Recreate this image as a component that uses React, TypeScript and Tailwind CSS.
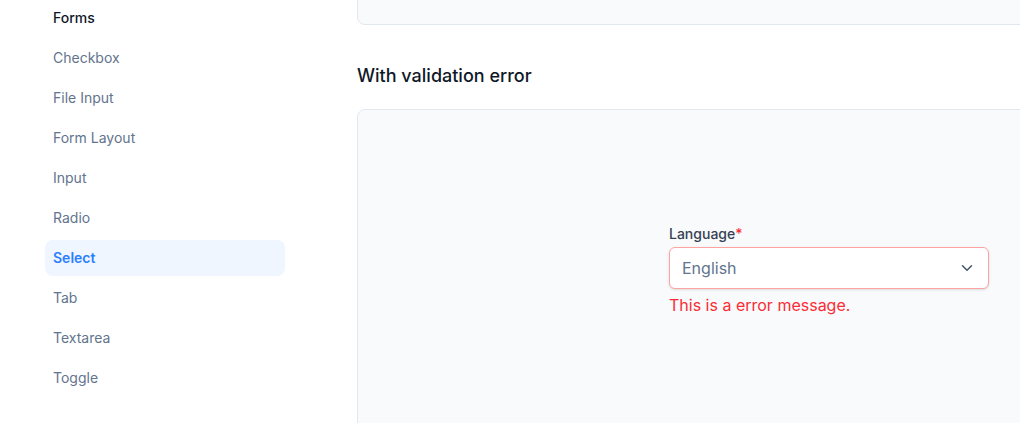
import { ChevronDown } from 'lucide-react';

const navItems = ['Checkbox', 'File Input', 'Form Layout', 'Input', 'Radio', 'Select', 'Tab', 'Textarea', 'Toggle'];

export default function App() {
  return (
    <div className="flex h-[423px] w-[1020px] overflow-hidden bg-white font-['Inter',sans-serif]">
      {/* Sidebar */}
      <aside className="w-[357px] shrink-0 pl-[45px]">
        <nav className="flex w-[240px] flex-col gap-1">
          <div className="flex h-9 items-center px-2 text-sm font-medium text-gray-900">Forms</div>
          {navItems.map(item => (
            <div
              key={item}
              className={
                item === 'Select'
                  ? 'flex h-9 items-center rounded-lg bg-blue-50 px-2 text-sm font-semibold text-blue-500'
                  : 'flex h-9 items-center px-2 text-sm text-slate-500'
              }
            >
              {item}
            </div>
          ))}
        </nav>
      </aside>

      {/* Main */}
      <main className="flex min-w-0 flex-1 flex-col">
        <div className="-mt-[20px] h-[45px] w-[960px] shrink-0 rounded-lg border border-slate-200 bg-slate-50"></div>
        <h2 className="mt-[37px] text-lg font-medium leading-7 text-gray-900">With validation error</h2>
        <div className="mt-[19px] h-[400px] w-[960px] shrink-0 rounded-lg border border-slate-200 bg-slate-50 pl-[311px] pt-[114px]">
          <div className="w-[320px]">
            <label className="block text-sm font-medium leading-5 text-gray-700">
              Language<span className="text-red-500">*</span>
            </label>
            <div className="mt-[3px] flex h-[42px] items-center justify-between rounded-md border border-red-300 bg-white pl-3 pr-3 shadow-sm">
              <span className="text-base text-slate-500">English</span>
              <ChevronDown className="h-[18px] w-[18px] text-slate-600" strokeWidth={2} />
            </div>
            <p className="mt-1 text-base leading-6 text-red-500">This is a error message.</p>
          </div>
        </div>
      </main>
    </div>
  );
}
